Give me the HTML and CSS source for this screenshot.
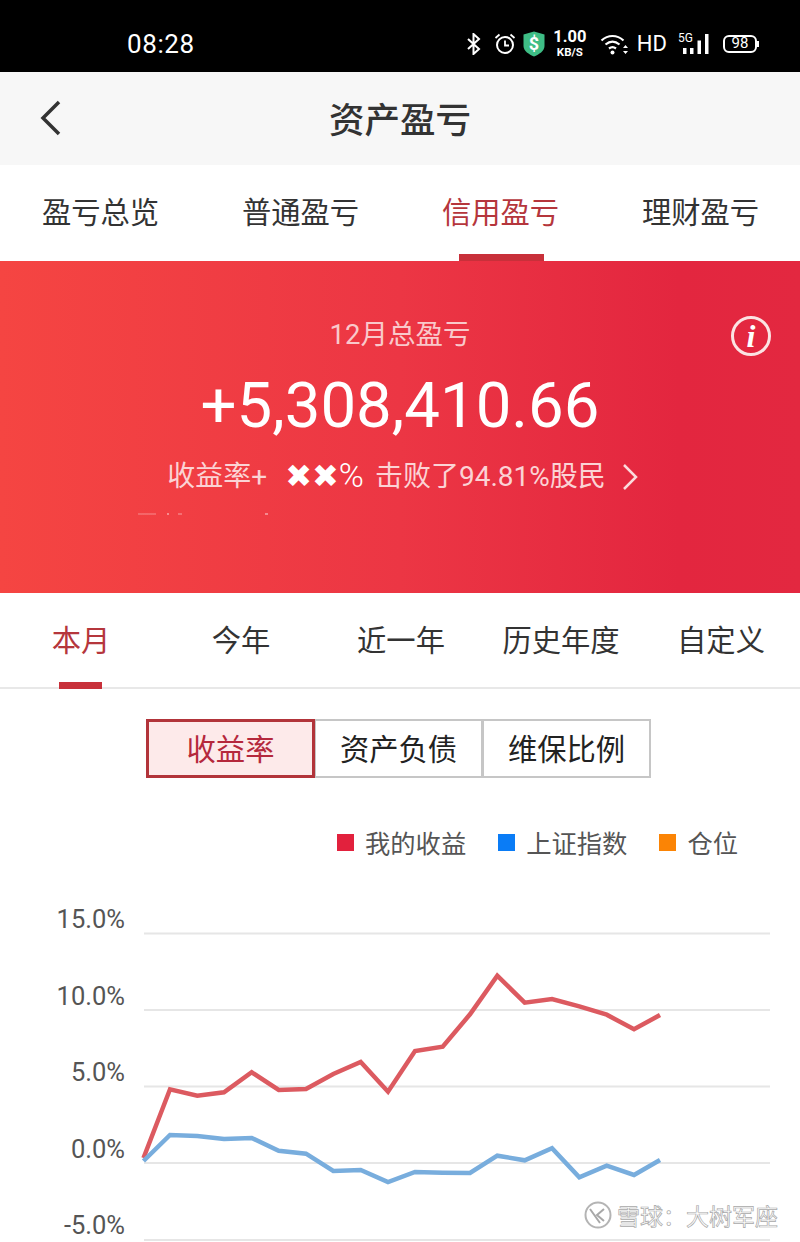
FILE: index.html
```html
<!DOCTYPE html>
<html lang="zh">
<head>
  <meta charset="UTF-8">
  <meta name="viewport" content="width=device-width, initial-scale=1.0">
  <title>资产盈亏</title>
  <link rel="stylesheet" href="styles.css">
</head>
<body>
  <div class="page">
    <div class="status-bar">
      <span class="time">08:28</span>
      <div class="status-icons">
        <svg class="ic-bt" width="16" height="22" viewBox="0 0 16 22"><path d="M2 6l11 10-5.500 5V1L13 6 2 16" fill="none" stroke="#fff" stroke-width="2"/></svg>
        <svg class="ic-alarm" width="22" height="22" viewBox="0 0 22 22"><circle cx="11" cy="12" r="8" fill="none" stroke="#fff" stroke-width="2"/><path d="M11 7.500V12.500H15M1.500 5L5.500 1.500M20.500 5L16.500 1.500" fill="none" stroke="#fff" stroke-width="1.800"/></svg>
        <svg class="ic-shield" width="22" height="26" viewBox="0 0 22 26"><path d="M11 0.500L21.500 3.500V15C21.500 20 16 23.500 11 25.500C6 23.500 0.500 20 0.500 15V3.500Z" fill="#3ebd85"/><text x="11" y="18.500" text-anchor="middle" class="shield-mark">$</text></svg>
        <div class="speed"><span class="speed-num">1.00</span><span class="speed-unit">KB/S</span></div>
        <svg class="ic-wifi" width="29" height="22" viewBox="0 0 29 22"><path d="M1.500 7.500C8 1.500 17 1.500 23.500 7.500M5.500 11.500C10 7.800 15 7.800 19.500 11.500M9 15.500C11 14 14 14 16 15.500" fill="none" stroke="#fff" stroke-width="2.200"/><circle cx="12.500" cy="19.500" r="2" fill="#fff"/><path d="M23 15l2.500-3 2.500 3zM23 18l2.500 3 2.500-3z" fill="#fff"/></svg>
        <span class="hd">HD</span>
        <div class="signal">
          <span class="five-g">5G</span>
          <svg width="30" height="22" viewBox="0 0 30 22"><path d="M4 15h3.500v6H4zM11 15h3.500v6H11zM18.500 7.500H22V21h-3.500zM26 1h3.500v20H26z" fill="#fff"/></svg>
        </div>
        <div class="battery"><span class="battery-num">98</span></div>
      </div>
    </div>

    <div class="nav-bar">
      <svg class="back" width="24" height="36" viewBox="0 0 24 36"><path d="M20 2L4 18l16 16" fill="none" stroke="#333" stroke-width="3.500"/></svg>
      <h1>资产盈亏</h1>
    </div>

    <div class="tabs">
      <div class="tab">盈亏总览</div>
      <div class="tab">普通盈亏</div>
      <div class="tab active">信用盈亏</div>
      <div class="tab">理财盈亏</div>
    </div>

    <div class="hero">
      <p class="hero-label">12月总盈亏</p>
      <p class="hero-value">+5,308,410.66</p>
      <div class="hero-rate">
        <span>收益率+</span>
        <span class="masked">✖✖<i>%</i></span>
        <span>击败了94.81%股民</span>
        <svg width="16" height="28" viewBox="0 0 16 28"><path d="M2 2l12 12L2 26" fill="none" stroke="#fbdcdd" stroke-width="2.500"/></svg>
      </div>
      <div class="info"><span>i</span></div>
      <div class="specks"></div>
    </div>

    <div class="ranges">
      <div class="range active">本月</div>
      <div class="range">今年</div>
      <div class="range">近一年</div>
      <div class="range">历史年度</div>
      <div class="range">自定义</div>
    </div>

    <div class="segments">
      <div class="seg active">收益率</div>
      <div class="seg">资产负债</div>
      <div class="seg">维保比例</div>
    </div>

    <div class="legend">
      <div class="legend-item"><i class="dot red"></i>我的收益</div>
      <div class="legend-item"><i class="dot blue"></i>上证指数</div>
      <div class="legend-item"><i class="dot orange"></i>仓位</div>
    </div>

    <svg class="chart" width="800" height="342" viewBox="0 900 800 342">
      <g class="grid">
        <line x1="144" x2="770" y1="933.500" y2="933.500"/>
        <line x1="144" x2="770" y1="1010" y2="1010"/>
        <line x1="144" x2="770" y1="1086.500" y2="1086.500"/>
        <line x1="144" x2="770" y1="1163" y2="1163"/>
        <line x1="144" x2="770" y1="1240" y2="1240"/>
      </g>
      <g class="axis">
        <text x="125" y="928">15.0%</text>
        <text x="125" y="1005">10.0%</text>
        <text x="125" y="1081">5.0%</text>
        <text x="125" y="1158">0.0%</text>
        <text x="125" y="1234">-5.0%</text>
      </g>
      <polyline class="line-red" points="143.500,1158 170,1089.300 197.300,1095.700 224,1092.300 251.700,1072.300 278.700,1090 306,1089 333.300,1074 360.700,1062 388,1091.700 415,1051 442.700,1046.700 470,1014.300 497.300,975.700 524.700,1002.700 552,999 579.300,1006.300 606.700,1014.700 634,1029.300 660,1015"/>
      <polyline class="line-blue" points="143.500,1161 170,1135 197.300,1136 224,1139 251.700,1138 278.700,1150.700 306,1153.700 333.300,1171 360.700,1170 388,1182 415,1172 442.700,1172.700 470,1173 497.300,1155.700 524.700,1160.300 552,1148.300 579.300,1177.300 606.700,1165.700 634,1175 660,1160"/>
    </svg>

    <div class="watermark">
      <svg width="28" height="28" viewBox="0 0 28 28"><circle cx="14" cy="14" r="12.500" fill="#fff" stroke="#b4b4b4" stroke-width="2"/><path d="M6 8l10 14M20 8l-7 6 7 6" fill="none" stroke="#a8a8a8" stroke-width="2"/></svg>
      <span>雪球：大树军座</span>
    </div>
  </div>
</body>
</html>
```

FILE: styles.css
```css
* {
  box-sizing: border-box;
}

body {
  margin: 0;
  background: #fff;
  font-family: Roboto, "Noto Sans CJK SC", sans-serif;
  color: #333;
}

.page {
  position: relative;
  width: 800px;
  height: 1242px;
  overflow: hidden;
}

/* status bar */
.status-bar {
  height: 72px;
  background: #000;
  color: #fff;
  display: flex;
  align-items: center;
  padding: 16px 43px 0 127px;
  justify-content: space-between;
}

.time {
  font-size: 26px;
  letter-spacing: 0.6px;
}

.status-icons {
  display: flex;
  align-items: center;
}

.ic-bt {
  margin-right: 12px;
}

.ic-alarm {
  margin-right: 7px;
}

.ic-shield {
  margin-right: 7px;
}

.shield-mark {
  fill: #fff;
  font-size: 18px;
  font-weight: 700;
}

.speed {
  display: flex;
  flex-direction: column;
  align-items: center;
  width: 36px;
  margin: 0 12px 1px 0;
  font-weight: 700;
  line-height: 1.172;
}

.speed-num {
  font-size: 16.500px;
}

.speed-unit {
  font-size: 11.500px;
}

.ic-wifi {
  margin-right: 8px;
}

.hd {
  font-size: 22px;
  margin-right: 12px;
}

.signal {
  position: relative;
  margin-right: 14px;
  height: 22px;
}

.five-g {
  position: absolute;
  left: -1px;
  top: -1px;
  font-size: 12px;
  line-height: 12px;
}

.battery {
  position: relative;
  width: 34px;
  height: 18px;
  border: 2px solid #fff;
  border-radius: 6px;
  display: flex;
  align-items: center;
  justify-content: center;
}

.battery::after {
  content: "";
  position: absolute;
  right: -4px;
  top: 4px;
  width: 2px;
  height: 6px;
  background: #fff;
}

.battery-num {
  font-size: 15px;
  line-height: 1;
}

/* nav */
.nav-bar {
  height: 93px;
  background: #f7f7f7;
  display: flex;
  align-items: center;
  justify-content: center;
  position: relative;
  padding-bottom: 3px;
}

.nav-bar h1 {
  margin: 0;
  font-size: 35.500px;
  font-weight: 500;
  color: #333;
}

.back {
  position: absolute;
  left: 39px;
  top: 28px;
}

/* top tabs */
.tabs {
  height: 96px;
  display: grid;
  grid-template-columns: repeat(4, 1fr);
  background: #fff;
}

.tab {
  position: relative;
  display: flex;
  align-items: center;
  justify-content: center;
  font-size: 29.300px;
  color: #333;
  padding: 0 0 6px 1px;
}

.tab.active {
  color: #b5363c;
}

.tab.active::after {
  content: "";
  position: absolute;
  left: 59px;
  bottom: 0;
  width: 85px;
  height: 7px;
  background: #c8303a;
}

/* hero */
.hero {
  position: relative;
  height: 332px;
  background: linear-gradient(90deg, #f54542 0%, #ec3644 50%, #e3263f 85%, #e32840 100%);
  display: flex;
  flex-direction: column;
  align-items: center;
  color: #fff;
}

.hero p {
  margin: 0;
}

.hero .hero-label {
  margin-top: 56px;
  font-size: 27.500px;
  line-height: 36px;
  color: #f9c9cb;
}

.hero .hero-value {
  margin-top: 13px;
  font-size: 63.500px;
  line-height: 80px;
}

.hero-rate {
  display: flex;
  align-items: center;
  font-size: 28px;
  line-height: 44px;
  color: #fbd3d5;
  margin: 9px 0 0 5px;
}

.masked {
  color: #fff;
  font-family: "DejaVu Sans", sans-serif;
  font-size: 32px;
  margin: -4px 11px 0 18px;
}

.masked i {
  font-family: Roboto, sans-serif;
  font-style: normal;
  font-size: 34px;
  font-weight: 300;
}

.hero-rate svg {
  margin-left: 16px;
}

.info {
  position: absolute;
  top: 55px;
  right: 29px;
  width: 40px;
  height: 40px;
  border: 3px solid #fbe3e3;
  border-radius: 50%;
  display: flex;
  align-items: center;
  justify-content: center;
  font-family: "Liberation Serif", serif;
  font-size: 32px;
  font-weight: 700;
  font-style: italic;
  color: #fff;
}

/* leftovers of the blanked-out line */
.specks {
  position: absolute;
  left: 138px;
  top: 252px;
  width: 130px;
  height: 2px;
  background: linear-gradient(90deg,
    rgba(255, 255, 255, 0.2) 0 14%,
    transparent 14% 22%,
    rgba(255, 255, 255, 0.4) 22% 24%,
    transparent 24% 31%,
    rgba(255, 255, 255, 0.25) 31% 34%,
    transparent 34% 98%,
    rgba(255, 255, 255, 0.4) 98%);
}

/* range tabs */
.ranges {
  height: 96px;
  display: grid;
  grid-template-columns: repeat(5, 1fr);
  border-bottom: 2px solid #e8e8e8;
}

.range {
  position: relative;
  display: flex;
  align-items: center;
  justify-content: center;
  font-size: 29.300px;
  color: #333;
  padding: 0 0 4px 2px;
}

.range.active {
  color: #b5363c;
}

.range.active::after {
  content: "";
  position: absolute;
  left: 59px;
  bottom: -2px;
  width: 43px;
  height: 7px;
  background: #c8303a;
}

/* segment */
.segments {
  display: flex;
  margin: 30px 0 0 146px;
  height: 59px;
}

.seg {
  width: 169px;
  margin-left: -1px;
  border: 2.500px solid #c6c6c6;
  display: flex;
  align-items: center;
  justify-content: center;
  font-size: 29.300px;
  color: #222;
  padding-bottom: 3px;
}

.seg.active {
  margin-left: 0;
  border-width: 3px;
  border-color: #b2343a;
  background: #fdeaea;
  color: #b5283c;
  position: relative;
}

.legend {
  display: flex;
  justify-content: flex-end;
  gap: 32px;
  margin: 46px 62px 0 0;
  height: 36px;
}

.legend-item {
  display: flex;
  align-items: center;
  gap: 11px;
  font-size: 25.300px;
  color: #555;
}

.dot {
  display: block;
  width: 17px;
  height: 17px;
}

.red {
  background: #e2213d;
}

.blue {
  background: #0a7cf6;
}

.orange {
  background: #fb8405;
}

/* chart */
.chart {
  position: absolute;
  left: 0;
  top: 900px;
}

.grid line {
  stroke: #e6e6e6;
  stroke-width: 2;
}

.axis text {
  text-anchor: end;
  font-size: 25.500px;
  fill: #555;
}

.line-red,
.line-blue {
  fill: none;
  stroke-width: 4.500;
  stroke-linejoin: miter;
}

.line-red {
  stroke: #dc5a60;
}

.line-blue {
  stroke: #78addd;
}

.watermark {
  position: absolute;
  left: 584px;
  top: 1198px;
  display: flex;
  align-items: center;
  gap: 5px;
  font-size: 23px;
  color: #fff;
  -webkit-text-stroke: 0.7px #a8a8a8;
  white-space: nowrap;
}
```
